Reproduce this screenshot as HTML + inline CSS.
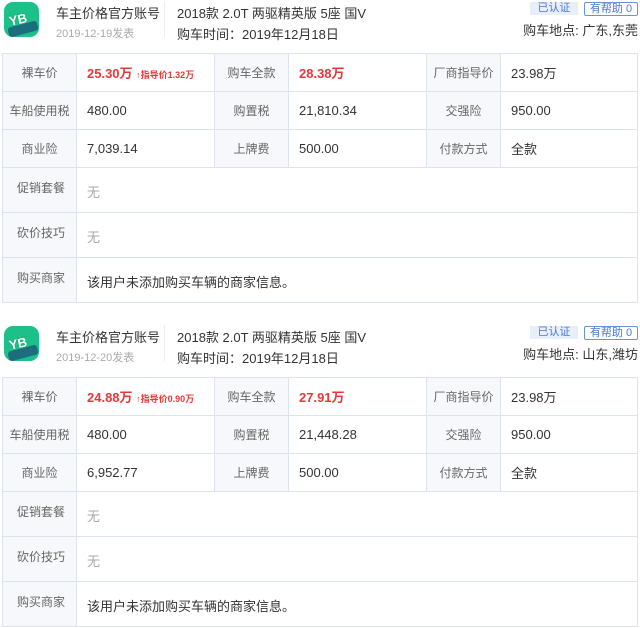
<!DOCTYPE html>
<html><head><meta charset="utf-8"><style>
body{margin:0;width:640px;height:628px;background:#fff;font-family:"Liberation Sans","Noto Sans CJK SC",sans-serif;position:relative;overflow:hidden;color:#333}
.blk{position:absolute;left:0;width:640px;height:304px}
.logo{position:absolute;left:4px;width:35px;height:35px;border-radius:9px;background:#1ec08a;overflow:hidden}
.logo span{position:absolute;left:5px;top:10px;color:#fff;font:bold 13px "Liberation Sans",sans-serif;transform:rotate(-12deg);text-shadow:0 0 2px #0a5}
.logo i{position:absolute;left:4px;top:22px;width:30px;height:10px;background:#1c6e7e;transform:rotate(-15deg);border-radius:3px}
.name{position:absolute;left:56px;font-size:13px;color:#333}
.date{position:absolute;left:56px;font-size:11px;color:#aaa}
.vdiv{position:absolute;left:164px;width:1px;height:36px;background:#eee}
.model{position:absolute;left:177px;font-size:13px;color:#333}
.badge{position:absolute;height:13px;font-size:11px;line-height:13px;text-align:center;color:#4a7bd0}
.b1{left:530px;width:48px;background:#e8eefa}
.b2{left:584px;width:52px;border:1px solid #6c93d8;border-radius:2px;height:12px;line-height:12px}
.loc{position:absolute;right:2px;font-size:13px;color:#333}
table{position:absolute;left:2px;width:636px;border-collapse:collapse;table-layout:fixed}
td{border:1px solid #dde3ef;font-size:13px;padding:0 0 0 10px}
tr.n{height:38px}
tr.t{height:45px}
td.l{background:#f7f8fb;color:#666;font-size:12px;text-align:center;padding:0}
td.ll{background:#f7f8fb;color:#666;font-size:12px;padding:11px 0 0 14px;text-align:left;vertical-align:top}
td.tv{vertical-align:top;padding-top:14px}
.red{color:#e4393c;font-weight:bold;font-size:13px}
.sm{color:#e4393c;font-size:9px;font-weight:bold}
.gr{color:#aaa}
</style></head><body>

<div class="blk" style="top:0">
<div class="logo" style="top:2px"><i></i><span>YB</span></div>
<div class="name" style="top:3px">车主价格官方账号</div>
<div class="date" style="top:25px">2019-12-19发表</div>
<div class="vdiv" style="top:1px"></div>
<div class="model" style="top:3px">2018款 2.0T 两驱精英版 5座 国V</div>
<div class="model" style="top:24px">购车时间：2019年12月18日</div>
<div class="badge b1" style="top:2px">已认证</div>
<div class="badge b2" style="top:2px">有帮助 0</div>
<div class="loc" style="top:20px">购车地点: 广东,东莞</div>
<table style="top:53px">
<colgroup><col style="width:74px"><col style="width:138px"><col style="width:74px"><col style="width:138px"><col style="width:74px"><col></colgroup>
<tr class="n"><td class="l">裸车价</td><td><span class="red">25.30万</span> <span class="sm">↑指导价1.32万</span></td><td class="l">购车全款</td><td><span class="red">28.38万</span></td><td class="l">厂商指导价</td><td>23.98万</td></tr>
<tr class="n"><td class="l">车船使用税</td><td>480.00</td><td class="l">购置税</td><td>21,810.34</td><td class="l">交强险</td><td>950.00</td></tr>
<tr class="n"><td class="l">商业险</td><td>7,039.14</td><td class="l">上牌费</td><td>500.00</td><td class="l">付款方式</td><td>全款</td></tr>
<tr class="t"><td class="ll">促销套餐</td><td colspan="5" class="tv gr">无</td></tr>
<tr class="t"><td class="ll">砍价技巧</td><td colspan="5" class="tv gr">无</td></tr>
<tr class="t"><td class="ll">购买商家</td><td colspan="5" class="tv">该用户未添加购买车辆的商家信息。</td></tr>
</table>
</div>

<div class="blk" style="top:324px">
<div class="logo" style="top:2px"><i></i><span>YB</span></div>
<div class="name" style="top:3px">车主价格官方账号</div>
<div class="date" style="top:25px">2019-12-20发表</div>
<div class="vdiv" style="top:1px"></div>
<div class="model" style="top:3px">2018款 2.0T 两驱精英版 5座 国V</div>
<div class="model" style="top:24px">购车时间：2019年12月18日</div>
<div class="badge b1" style="top:2px">已认证</div>
<div class="badge b2" style="top:2px">有帮助 0</div>
<div class="loc" style="top:20px">购车地点: 山东,潍坊</div>
<table style="top:53px">
<colgroup><col style="width:74px"><col style="width:138px"><col style="width:74px"><col style="width:138px"><col style="width:74px"><col></colgroup>
<tr class="n"><td class="l">裸车价</td><td><span class="red">24.88万</span> <span class="sm">↑指导价0.90万</span></td><td class="l">购车全款</td><td><span class="red">27.91万</span></td><td class="l">厂商指导价</td><td>23.98万</td></tr>
<tr class="n"><td class="l">车船使用税</td><td>480.00</td><td class="l">购置税</td><td>21,448.28</td><td class="l">交强险</td><td>950.00</td></tr>
<tr class="n"><td class="l">商业险</td><td>6,952.77</td><td class="l">上牌费</td><td>500.00</td><td class="l">付款方式</td><td>全款</td></tr>
<tr class="t"><td class="ll">促销套餐</td><td colspan="5" class="tv gr">无</td></tr>
<tr class="t"><td class="ll">砍价技巧</td><td colspan="5" class="tv gr">无</td></tr>
<tr class="t"><td class="ll">购买商家</td><td colspan="5" class="tv">该用户未添加购买车辆的商家信息。</td></tr>
</table>
</div>
</body></html>
